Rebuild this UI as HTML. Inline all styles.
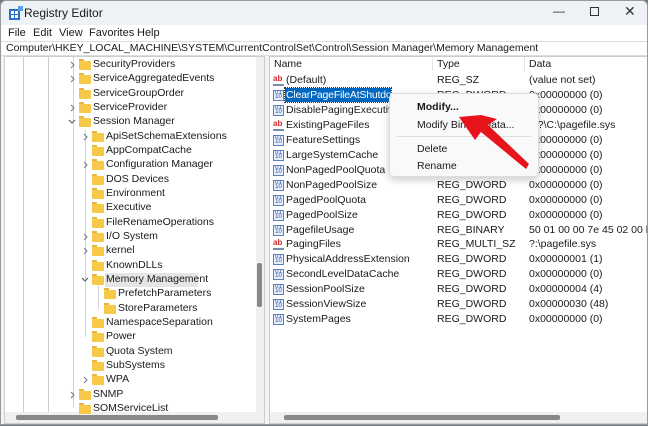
<!DOCTYPE html><html><head><style>
*{margin:0;padding:0;box-sizing:border-box}
body{width:648px;height:426px;background:#6d7a80;font-family:"Liberation Sans",sans-serif;font-size:10.5px;color:#1a1a1a;position:relative;overflow:hidden}
.win{position:absolute;left:0;top:0;width:648px;height:425px;background:#f3f3f3;border:1px solid #9a9a9a;border-radius:6px 6px 0 0;overflow:hidden}
.a{position:absolute;white-space:nowrap}
.f{position:absolute;width:12px;height:9px;background:#f7c948;border-radius:1px}
.f:before{content:"";position:absolute;left:0;top:-2px;width:5px;height:2px;background:#e9b53a}
.r{position:absolute;height:15px;line-height:15px;white-space:nowrap}
.ic{position:absolute;width:11px;height:11px;border:1px solid #5b7fb8;background:#e8eefa;font-size:6px;line-height:4px;color:#2251a8;overflow:hidden;text-align:center}
.ab{position:absolute;width:11px;height:11px;font-size:8px;color:#d1272b;font-weight:bold;line-height:8px;border-bottom:2px solid #7a8ca8;background:#fff}
.chev{position:absolute}
</style></head><body>
<div class="win">
<div class="a" style="left:0;top:0;width:648px;height:24px;background:#eef1f5"></div>
<svg class="a" style="left:8px;top:5px" width="14" height="14"><rect x="0" y="3" width="11" height="11" fill="#2a6fc9"/><rect x="2" y="5" width="3" height="3" fill="#fff"/><rect x="6" y="5" width="3" height="3" fill="#fff"/><rect x="2" y="9" width="3" height="3" fill="#fff"/><rect x="6" y="9" width="3" height="3" fill="#fff"/><rect x="9" y="0" width="5" height="5" fill="#5aa0e8"/></svg>
<div class="a" style="left:23px;top:5px;font-size:12px">Registry Editor</div>
<div class="a" style="left:552px;top:3px;font-size:12px;color:#333">—</div>
<div class="a" style="left:589px;top:6px;width:9px;height:9px;border:1px solid #333"></div>
<div class="a" style="left:623px;top:2px;font-size:14px;color:#333">✕</div>
<div class="a" style="left:0;top:24px;width:648px;height:16px;background:#fff"></div>
<div class="a" style="left:7px;top:26px;font-size:11px">File</div><div class="a" style="left:32px;top:26px;font-size:11px">Edit</div><div class="a" style="left:58px;top:26px;font-size:11px">View</div><div class="a" style="left:88px;top:26px;font-size:11px">Favorites</div><div class="a" style="left:136px;top:26px;font-size:11px">Help</div>
<div class="a" style="left:0;top:40px;width:648px;height:15px;background:#fff;border-top:1px solid #ddd;border-bottom:1px solid #ddd"></div>
<div class="a" style="left:5px;top:41px">Computer\HKEY_LOCAL_MACHINE\SYSTEM\CurrentControlSet\Control\Session Manager\Memory Management</div>
<div class="a" style="left:3px;top:55px;width:261px;height:368px;background:#fff;border:1px solid #ccc"></div>
<div class="a" style="left:22px;top:56px;width:1px;height:355px;background:#ccc"></div>
<div class="a" style="left:47px;top:56px;width:1px;height:355px;background:#ccc"></div>
<div class="a" style="left:72px;top:56px;width:1px;height:351px;background:#d4d4d4"></div>
<div class="a" style="left:84px;top:129px;width:1px;height:207px;background:#d4d4d4"></div>
<div class="a" style="left:97px;top:284px;width:1px;height:24px;background:#d4d4d4"></div>
<div class="a" style="left:104px;top:272px;width:93px;height:14px;background:#e5e5e5"></div>
<div class="a" style="left:255px;top:56px;width:8px;height:355px;background:#f0f0f0"></div>
<div class="a" style="left:256px;top:262px;width:5px;height:44px;background:#888;border-radius:2px"></div>
<div class="a" style="left:4px;top:411px;width:259px;height:11px;background:#f0f0f0"></div>
<div class="a" style="left:15px;top:414px;width:202px;height:5px;background:#888;border-radius:2px"></div>
<div id="tree"></div>
<div class="a" style="left:268px;top:55px;width:380px;height:368px;background:#fff;border:1px solid #ccc"></div>
<div class="a" style="left:273px;top:57px">Name</div><div class="a" style="left:436px;top:57px">Type</div><div class="a" style="left:528px;top:57px">Data</div>
<div class="a" style="left:431px;top:56px;width:1px;height:14px;background:#e5e5e5"></div>
<div class="a" style="left:523px;top:56px;width:1px;height:14px;background:#e5e5e5"></div>
<div class="a" style="left:284px;top:87px;width:106px;height:14px;background:#0067c0;outline:1px dotted #333"></div>
<div id="list"></div>
<div class="a" style="left:269px;top:411px;width:378px;height:11px;background:#f0f0f0"></div>
<div class="a" style="left:283px;top:414px;width:276px;height:5px;background:#888;border-radius:2px"></div>
<div class="a" style="left:388px;top:92px;width:150px;height:84px;background:#f9f9f9;border:1px solid #ddd;border-radius:5px;box-shadow:0 3px 8px rgba(0,0,0,.2)"></div>
<div class="a" style="left:416px;top:100px;font-weight:bold">Modify...</div>
<div class="a" style="left:416px;top:118px">Modify Binary Data...</div>
<div class="a" style="left:396px;top:135px;width:134px;height:1px;background:#ddd"></div>
<div class="a" style="left:416px;top:142px">Delete</div>
<div class="a" style="left:416px;top:159px">Rename</div>
<svg class="a" style="left:0;top:0" width="648" height="426"><polygon points="458,116 480,114 496,118 487,124 528,163 525,168 480,131 474,139" fill="#e8141b"/></svg>
</div>
<script>
var t=[["SecurityProviders",1,">"],["ServiceAggregatedEvents",1,">"],["ServiceGroupOrder",1,""],["ServiceProvider",1,">"],["Session Manager",1,"v"],["ApiSetSchemaExtensions",2,">"],["AppCompatCache",2,""],["Configuration Manager",2,">"],["DOS Devices",2,""],["Environment",2,""],["Executive",2,""],["FileRenameOperations",2,""],["I/O System",2,">"],["kernel",2,">"],["KnownDLLs",2,""],["Memory Management",2,"v"],["PrefetchParameters",3,""],["StoreParameters",3,""],["NamespaceSeparation",2,""],["Power",2,""],["Quota System",2,""],["SubSystems",2,""],["WPA",2,">"],["SNMP",1,">"],["SOMServiceList",1,""]];
var h="";t.forEach(function(e,i){var y=56+i*14.33,fx=[0,78,91,103][e[1]],tx=fx+14;
if(e[2]==">")h+='<svg class="chev" style="left:'+(fx-9)+'px;top:'+(y+4)+'px" width="6" height="8"><path d="M1 1L4 4L1 7" fill="none" stroke="#777" stroke-width="1"/></svg>';
else if(e[2]=="v")h+='<svg class="chev" style="left:'+(fx-11)+'px;top:'+(y+5)+'px" width="8" height="6"><path d="M1 1L4 4L7 1" fill="none" stroke="#555" stroke-width="1"/></svg>';
h+='<div class="f" style="left:'+fx+'px;top:'+(y+4)+'px"></div><div class="r" style="left:'+tx+'px;top:'+y+'px">'+e[0]+'</div>';});
document.getElementById("tree").outerHTML=h;
var l=[["(Default)","REG_SZ","(value not set)",1],["ClearPageFileAtShutdown","REG_DWORD","0x00000000 (0)"],["DisablePagingExecutive","REG_DWORD","0x00000000 (0)"],["ExistingPageFiles","REG_MULTI_SZ","\\??\\C:\\pagefile.sys",1],["FeatureSettings","REG_DWORD","0x00000000 (0)"],["LargeSystemCache","REG_DWORD","0x00000000 (0)"],["NonPagedPoolQuota","REG_DWORD","0x00000000 (0)"],["NonPagedPoolSize","REG_DWORD","0x00000000 (0)"],["PagedPoolQuota","REG_DWORD","0x00000000 (0)"],["PagedPoolSize","REG_DWORD","0x00000000 (0)"],["PagefileUsage","REG_BINARY","50 01 00 00 7e 45 02 00 be 4"],["PagingFiles","REG_MULTI_SZ","?:\\pagefile.sys",1],["PhysicalAddressExtension","REG_DWORD","0x00000001 (1)"],["SecondLevelDataCache","REG_DWORD","0x00000000 (0)"],["SessionPoolSize","REG_DWORD","0x00000004 (4)"],["SessionViewSize","REG_DWORD","0x00000030 (48)"],["SystemPages","REG_DWORD","0x00000000 (0)"]];
h="";l.forEach(function(e,i){var y=72+i*14.95;
h+=e[3]?'<div class="ab" style="left:272px;top:'+(y+2)+'px">ab</div>':'<div class="ic" style="left:272px;top:'+(y+2)+'px">01<br>10</div>';
h+='<div class="r" style="left:285px;top:'+y+'px;'+(i==1?'color:#fff;letter-spacing:-0.2px':'')+'">'+e[0]+'</div><div class="r" style="left:436px;top:'+y+'px">'+e[1]+'</div><div class="r" style="left:528px;top:'+y+'px;width:119px;overflow:hidden">'+e[2]+'</div>';});
document.getElementById("list").outerHTML=h;
</script>
</body></html>
